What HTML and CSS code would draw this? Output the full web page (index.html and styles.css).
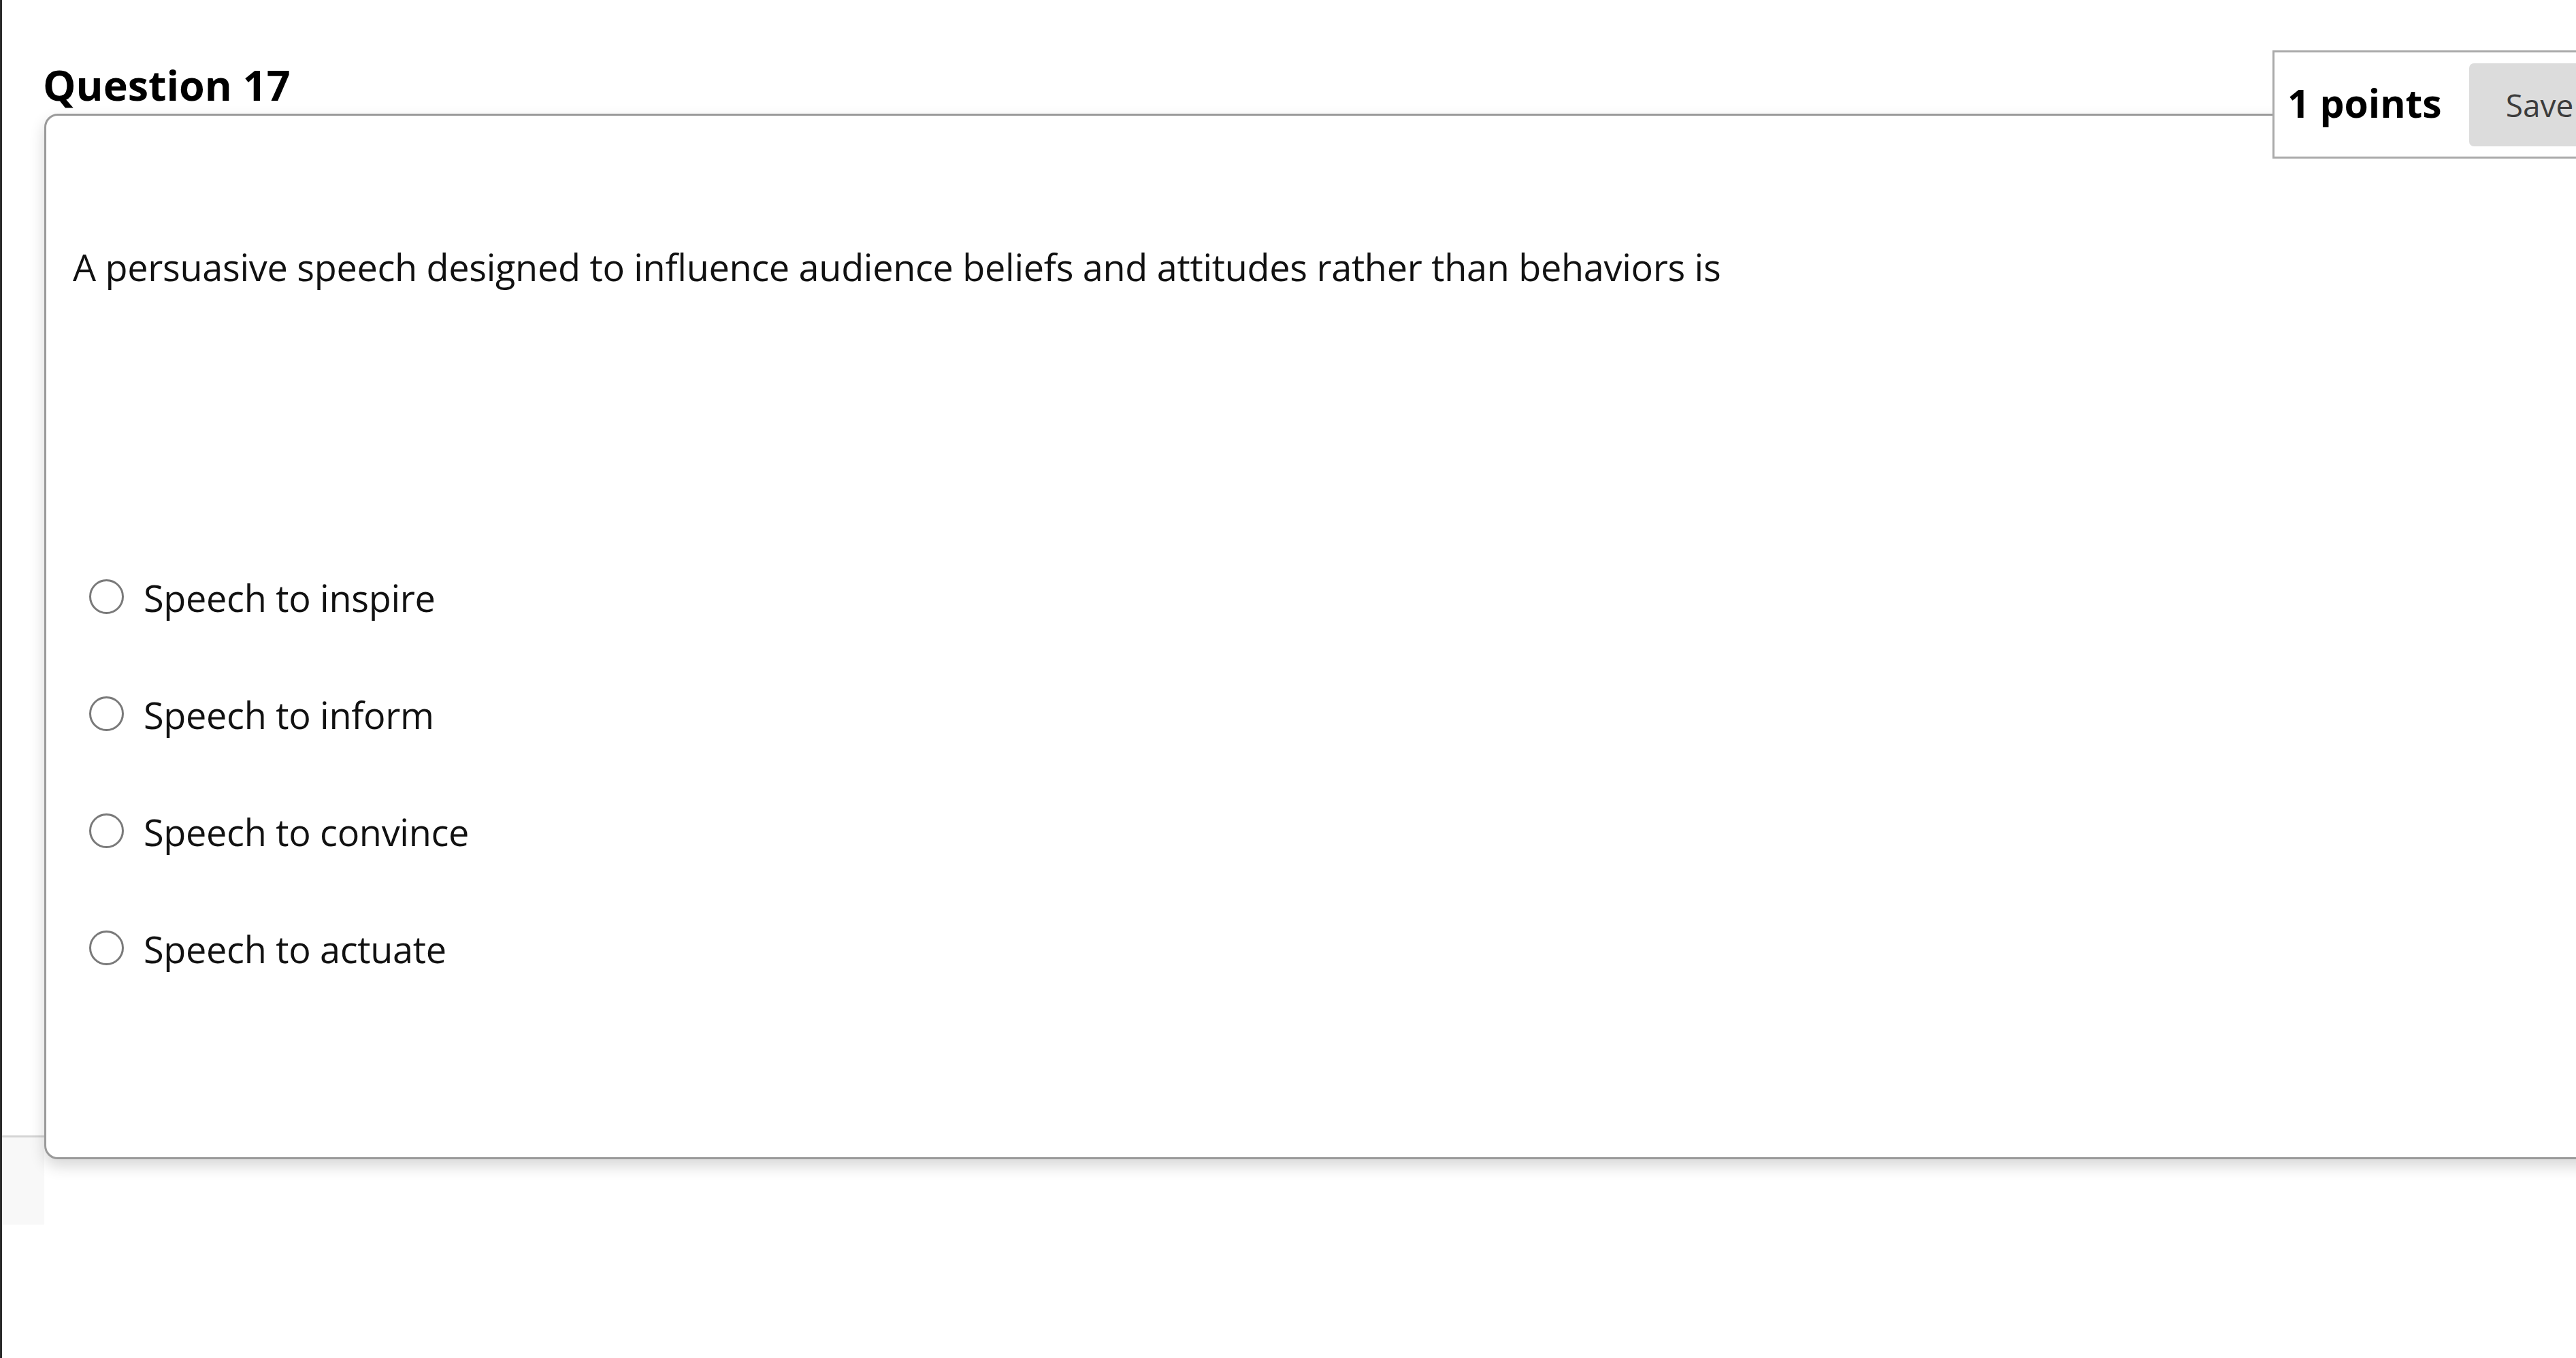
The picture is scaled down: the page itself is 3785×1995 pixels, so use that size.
FILE: index.html
```html
<!DOCTYPE html>
<html lang="en">
<head>
<meta charset="utf-8">
<title>Question 17</title>
<link rel="stylesheet" href="styles.css">
</head>
<body>
<div class="page">
  <div class="gutter">
    <div class="gutter-spacer"></div>
    <div class="gutter-block"></div>
  </div>
  <main class="question">
    <h2 class="question-title">Question 17</h2>
    <div class="points-box">
      <span class="points">1 points</span>
      <button class="save-btn" type="button">Save</button>
    </div>
    <section class="card">
      <p class="prompt">A persuasive speech designed to influence audience beliefs and attitudes rather than behaviors is</p>
      <ul class="options">
        <li class="option"><span class="radio"></span><span class="label">Speech to inspire</span></li>
        <li class="option"><span class="radio"></span><span class="label">Speech to inform</span></li>
        <li class="option"><span class="radio"></span><span class="label">Speech to convince</span></li>
        <li class="option"><span class="radio"></span><span class="label">Speech to actuate</span></li>
      </ul>
    </section>
  </main>
</div>
</body>
</html>
```

FILE: styles.css
```css
html, body {
  margin: 0;
  padding: 0;
  background: #ffffff;
  overflow: hidden;
}

body {
  font-family: "Open Sans", "Noto Sans", sans-serif;
  color: #111111;
  width: 3785px;
  height: 1995px;
}

.page {
  display: flex;
  height: 1995px;
  border-left: 3px solid #2b2b2b;
  box-sizing: border-box;
}

.gutter {
  width: 62px;
  flex: none;
  display: flex;
  flex-direction: column;
}

.gutter-spacer {
  height: 1668px;
  flex: none;
}

.gutter-block {
  height: 128px;
  border-top: 3px solid #d4d4d4;
  background: #f8f8f8;
}

.question {
  position: relative;
  flex: none;
  width: 3800px;
  display: flex;
  flex-direction: column;
}

.question-title {
  margin: 87px 0 5px -2px;
  font-size: 61px;
  line-height: 75px;
  font-weight: 700;
  color: #000000;
}

.points-box {
  position: absolute;
  top: 74px;
  left: 3274px;
  width: 600px;
  height: 153px;
  border: 3px solid #aaaaaa;
  background: #ffffff;
  display: flex;
  align-items: center;
  padding-left: 19px;
  gap: 40px;
  z-index: 2;
}

.points {
  font-size: 57px;
  font-weight: 700;
  color: #000000;
  line-height: 1;
  margin-top: -4px;
}

.save-btn {
  font-family: "Open Sans", "Noto Sans", sans-serif;
  font-size: 46px;
  color: #3c3c3c;
  background: #dcdcdc;
  border: none;
  border-radius: 7px;
  height: 122px;
  padding: 0 60px 0 54px;
  text-align: left;
  width: 300px;
}

.card {
  border: 3px solid #9a9a9a;
  border-radius: 20px;
  background: #ffffff;
  box-shadow: 0 10px 22px rgba(0, 0, 0, 0.16);
  padding: 183px 0 267px 0;
}

.prompt {
  margin: 0 0 0 39px;
  font-size: 54px;
  letter-spacing: -0.3px;
  line-height: 78px;
  color: #111111;
}

.options {
  list-style: none;
  margin: 408px 0 0 63px;
  padding: 0;
  display: flex;
  flex-direction: column;
  gap: 94px;
}

.option {
  display: flex;
  align-items: center;
  height: 78px;
}

.radio {
  width: 45px;
  height: 45px;
  border: 3px solid #7a7a7a;
  border-radius: 50%;
  flex: none;
  margin-top: -4px;
  background: #ffffff;
}

.label {
  margin-left: 29px;
  font-size: 54px;
  letter-spacing: -0.3px;
  line-height: 78px;
  color: #111111;
}
```
